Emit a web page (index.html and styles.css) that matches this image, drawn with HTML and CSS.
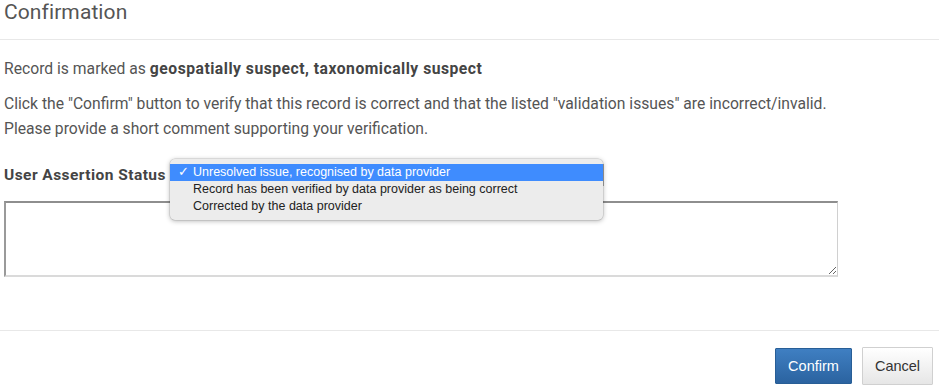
FILE: index.html
```html
<!DOCTYPE html>
<html>
<head>
<meta charset="utf-8">
<link rel="stylesheet" href="styles.css">
</head>
<body>
<div class="modal">
  <div class="modal-header">
    <h3 class="title">Confirmation</h3>
  </div>
  <div class="modal-body">
    <p class="lead">Record is marked as <b>geospatially suspect, taxonomically suspect</b></p>
    <p class="info">Click the "Confirm" button to verify that this record is correct and that the listed "validation issues" are incorrect/invalid.<br>Please provide a short comment supporting your verification.</p>
    <div class="status-row">
      <label class="status-label">User Assertion Status</label>
      <div class="select-wrap">
        <div class="select-closed"></div>
        <ul class="popup">
          <li class="opt selected"><span class="check">✓</span>Unresolved issue, recognised by data provider</li>
          <li class="opt"><span class="check"></span>Record has been verified by data provider as being correct</li>
          <li class="opt"><span class="check"></span>Corrected by the data provider</li>
        </ul>
      </div>
    </div>
    <textarea class="comment"></textarea>
  </div>
  <div class="modal-footer">
    <button class="btn btn-primary">Confirm</button>
    <button class="btn btn-default">Cancel</button>
  </div>
</div>
</body>
</html>
```
FILE: styles.css
```css
html, body {
  margin: 0;
  padding: 0;
  background: #fff;
}
body {
  font-family: Roboto, "Liberation Sans", sans-serif;
  color: #555;
  width: 939px;
  height: 387px;
  overflow: hidden;
}
.modal {
  display: flex;
  flex-direction: column;
}
.modal-header {
  height: 40px;
  border-bottom: 1px solid #e8e8e8;
  padding: 0 4px;
  box-sizing: border-box;
}
.title {
  margin: 0;
  padding-top: 0;
  font-size: 21px;
  font-weight: 400;
  line-height: 24px;
  color: #555;
  letter-spacing: 0.1px;
}
.modal-body {
  padding: 16px 4px 0 4px;
  height: 291px;
  box-sizing: border-box;
  border-bottom: 1px solid #e8e8e8;
}
.lead {
  margin: 0;
  font-size: 15.7px;
  line-height: 25px;
}
.lead b {
  font-weight: 700;
  color: #444;
  letter-spacing: 0.5px;
}
.info {
  margin: 10px 0 0 0;
  font-size: 15.7px;
  line-height: 25px;
}
.status-row {
  display: flex;
  align-items: center;
  margin-top: 22px;
  height: 24px;
}
.status-label {
  flex: 0 0 163px;
  font-size: 15.5px;
  font-weight: 700;
  color: #444;
  letter-spacing: 0.45px;
  white-space: nowrap;
}
.select-wrap {
  position: relative;
  margin-left: 3px;
  width: 434px;
  height: 22px;
}
.select-closed {
  position: absolute;
  right: 0;
  top: 0;
  width: 434px;
  height: 22px;
  border-right: 1px solid #aaa;
}
.popup {
  position: absolute;
  left: 0;
  top: -5px;
  width: 433px;
  margin: 0;
  padding: 5px 0;
  list-style: none;
  background: #ececec;
  border-radius: 5px;
  box-shadow: 0 1px 5px rgba(0,0,0,0.3), 0 0 0 0.5px rgba(0,0,0,0.15);
  font-family: "Liberation Sans", Arial, sans-serif;
  font-size: 12.5px;
  color: #222;
  box-sizing: border-box;
}
.opt {
  height: 17px;
  line-height: 17px;
  display: flex;
  white-space: nowrap;
}
.opt.selected {
  background: #3f8cfe;
  color: #fff;
}
.check {
  display: inline-block;
  width: 23px;
  text-align: right;
  padding-right: 4px;
  box-sizing: border-box;
}
.comment {
  display: block;
  margin-top: 14px;
  width: 834px;
  height: 76px;
  box-sizing: border-box;
  border-style: solid;
  border-width: 2px 1px 2px 2px;
  border-color: #8e8e8e #d0d0d0 #dadada #9a9a9a;
  resize: both;
  background: #fff;
  padding: 4px;
  font-family: inherit;
  outline: none;
}
.modal-footer {
  display: flex;
  justify-content: flex-end;
  align-items: center;
  gap: 10px;
  padding: 16px 6px 0 0;
}
.btn {
  font-family: "Liberation Sans", Arial, sans-serif;
  font-size: 14.5px;
  border-radius: 1px;
  cursor: pointer;
  box-sizing: border-box;
  padding: 0;
}
.btn-primary {
  width: 77px;
  height: 36px;
  color: #fff;
  background: linear-gradient(#3f7fc2, #2b63a0);
  border: 1px solid #285e96;
}
.btn-default {
  width: 71px;
  height: 38px;
  color: #333;
  background: linear-gradient(#ffffff, #e6e6e6);
  border: 1px solid #d0d0d0;
}
```
